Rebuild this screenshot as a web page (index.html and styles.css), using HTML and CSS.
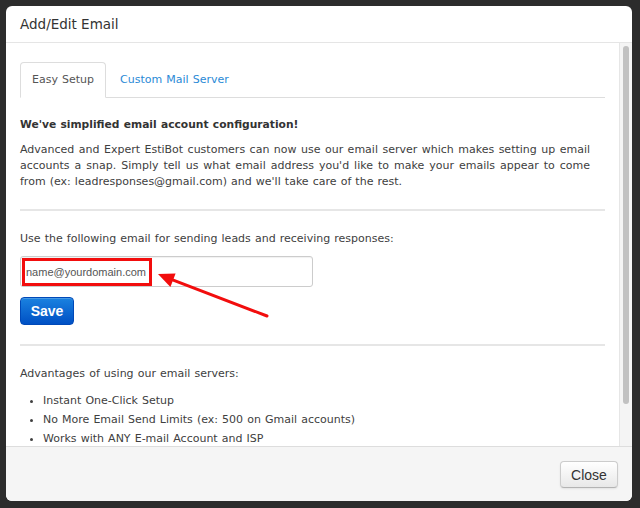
FILE: index.html
```html
<!DOCTYPE html>
<html>
<head>
<meta charset="utf-8">
<link rel="stylesheet" href="styles.css">
</head>
<body>
<div class="modal">
  <div class="modal-header"><h3 class="title">Add/Edit Email</h3></div>
  <div class="modal-body">
    <div class="pane">
      <ul class="tabs">
        <li class="tab active">Easy Setup</li>
        <li class="tab"><a class="tab-link" href="#">Custom Mail Server</a></li>
      </ul>
      <p class="lead">We've simplified email account configuration!</p>
      <p class="intro">Advanced and Expert EstiBot customers can now use our email server which makes setting up email accounts a snap. Simply tell us what email address you'd like to make your emails appear to come from (ex: leadresponses@gmail.com) and we'll take care of the rest.</p>
      <hr class="rule">
      <p class="label">Use the following email for sending leads and receiving responses:</p>
      <div class="field">
        <input class="email" type="text" value="name@yourdomain.com">
        <span class="mark"></span>
        <svg class="arrow" width="125" height="65" viewBox="0 0 125 65">
          <line x1="117" y1="55" x2="20" y2="17.8" stroke="#f20d0d" stroke-width="3" stroke-linecap="round"/>
          <polygon points="8,13 25.6,12.6 20.4,26" fill="#f20d0d"/>
        </svg>
      </div>
      <button class="btn-primary">Save</button>
      <hr class="rule">
      <p class="label">Advantages of using our email servers:</p>
      <ul class="list">
        <li>Instant One-Click Setup</li>
        <li>No More Email Send Limits (ex: 500 on Gmail accounts)</li>
        <li>Works with ANY E-mail Account and ISP</li>
      </ul>
    </div>
    <div class="scrollbar"><div class="thumb"></div></div>
  </div>
  <div class="modal-footer"><button class="btn">Close</button></div>
</div>
</body>
</html>
```
FILE: styles.css
```css
html, body {
  margin: 0;
  padding: 0;
}
body {
  background: #2c2c2c;
  width: 640px;
  height: 508px;
  padding: 6px 0 0 6px;
  box-sizing: border-box;
  font-family: "DejaVu Sans", Verdana, sans-serif;
  color: #333;
}
.modal {
  width: 626px;
  height: 495px;
  background: #fff;
  border-radius: 6px;
  overflow: hidden;
  display: flex;
  flex-direction: column;
}
.modal-header {
  height: 36px;
  border-bottom: 1px solid #e5e5e5;
  display: flex;
  align-items: center;
  padding: 0 14px;
  flex: none;
}
.title {
  margin: 0;
  font-size: 13.5px;
  font-weight: normal;
  color: #333;
}
.modal-body {
  flex: 1;
  min-height: 0;
  display: flex;
}
.pane {
  flex: 1;
  min-width: 0;
  overflow: hidden;
  padding: 19px 14px 0 14px;
  font-size: 11px;
  word-spacing: 0.6px;
}
.scrollbar {
  flex: none;
  width: 13px;
  background: #f4f4f4;
  border-left: 1px solid #e6e6e6;
  padding: 3px 3px 0 3px;
  box-sizing: border-box;
}
.thumb {
  height: 358px;
  background: #c1c1c1;
  border-radius: 4px;
}
.tabs {
  list-style: none;
  margin: 0 0 18px 0;
  padding: 0;
  display: flex;
  border-bottom: 1px solid #ddd;
}
.tab {
  margin: 0 2px -1px 0;
  padding: 8px 11px;
  line-height: 18px;
  border: 1px solid transparent;
  border-radius: 4px 4px 0 0;
}
.tab.active {
  border-color: #ddd #ddd transparent #ddd;
  background: #fff;
  color: #555;
}
.tab-link {
  color: #2a8ad6;
  text-decoration: none;
}
.lead {
  margin: 0 0 8px 0;
  line-height: 18px;
  font-size: 10.7px;
  font-weight: bold;
  color: #333;
}
.intro {
  margin: 0;
  padding-right: 15px;
  line-height: 16px;
  text-align: justify;
  color: #404040;
}
.rule {
  margin: 19px 0 20px 0;
  border: 0;
  height: 2px;
  background: #e6e6e6;
}
.label {
  margin: 0 0 9px 0;
  line-height: 16px;
  color: #404040;
}
.field {
  position: relative;
  width: 293px;
  height: 31px;
  margin-bottom: 10px;
}
.email {
  width: 293px;
  height: 31px;
  box-sizing: border-box;
  border: 1px solid #ccc;
  border-radius: 3px;
  padding: 0 5px;
  font-family: "Liberation Sans", Arial, sans-serif;
  font-size: 11px;
  word-spacing: 0;
  color: #555;
  box-shadow: inset 0 1px 1px rgba(0,0,0,0.06);
  outline: none;
}
.mark {
  position: absolute;
  left: 2px;
  top: 2px;
  width: 130px;
  height: 28px;
  box-sizing: border-box;
  border: 3px solid #f20d0d;
}
.arrow {
  position: absolute;
  left: 130px;
  top: 5px;
}
.btn-primary {
  display: block;
  width: 54px;
  height: 28px;
  margin: 0 0 19px 0;
  padding: 0;
  border: 1px solid #0049b8;
  border-radius: 4px;
  background: linear-gradient(#1a82e0, #0050c4);
  color: #fff;
  font-family: "Liberation Sans", Arial, sans-serif;
  font-weight: bold;
  font-size: 14px;
  box-shadow: inset 0 1px 0 rgba(255,255,255,0.2);
}
.list {
  margin: 0;
  padding: 0 0 0 23px;
  line-height: 19px;
  color: #404040;
}
.modal-footer {
  flex: none;
  height: 55px;
  border-top: 1px solid #ddd;
  background: #f5f5f5;
  display: flex;
  justify-content: flex-end;
  align-items: flex-start;
  padding: 14px 14px 0 0;
  box-sizing: border-box;
}
.btn {
  width: 58px;
  height: 27px;
  padding: 0;
  border: 1px solid #ccc;
  border-bottom-color: #b3b3b3;
  border-radius: 4px;
  background: linear-gradient(#ffffff, #e8e8e8);
  color: #333;
  font-family: "Liberation Sans", Arial, sans-serif;
  font-size: 14px;
  box-shadow: inset 0 1px 0 rgba(255,255,255,0.3), 0 1px 2px rgba(0,0,0,0.08);
}
```
